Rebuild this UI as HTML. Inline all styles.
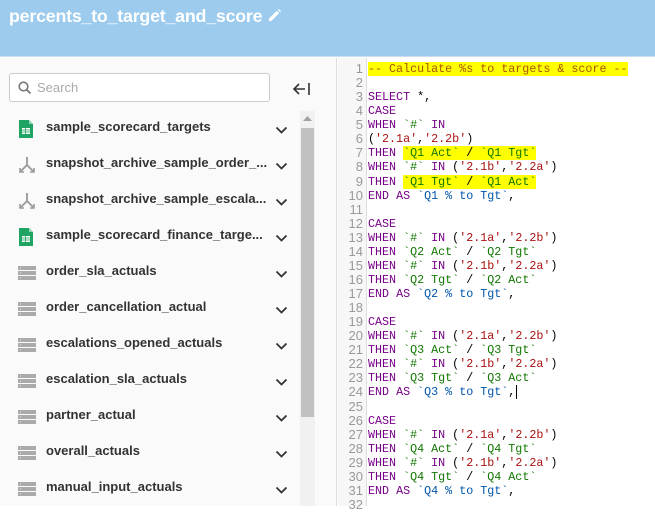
<!DOCTYPE html>
<html><head><meta charset="utf-8">
<style>
*{margin:0;padding:0;box-sizing:border-box}
body{width:655px;height:506px;overflow:hidden;background:#fff;font-family:"Liberation Sans",sans-serif;position:relative}
.hdr{position:absolute;left:0;top:0;width:655px;height:57px;background:#9ccbee;border-bottom:1px solid #c9def0}
.hdr .t{position:absolute;left:9px;top:6px;color:#fff;font-weight:bold;font-size:17.8px;letter-spacing:-0.2px}
.side{position:absolute;left:0;top:58px;width:337px;height:448px;background:#fafafa;border-right:1px solid #ddd}
.search{position:absolute;left:9px;top:15px;width:261px;height:29px;border:1px solid #ccc;border-radius:3px;background:#fff}
.search span{position:absolute;left:27px;top:6px;color:#aaa;font-size:13px}
.item{position:absolute;left:0;height:20px;width:300px}
.item .n{position:absolute;left:46px;top:1px;font-size:13px;font-weight:bold;color:#333;white-space:nowrap}
.item .ic{position:absolute;left:18px;top:1px}
.item .ch{position:absolute;left:275px;top:4px}
.sb{position:absolute;left:300px;top:53px;width:15px;height:395px;background:#f1f1f1}
.sb .th{position:absolute;left:1px;top:17px;width:13px;height:289px;background:#c1c1c1}
.gut{position:absolute;left:338px;top:58px;width:29px;height:448px;background:#f7f7f7;border-right:1px solid #ddd}
.code{position:absolute;left:338px;top:62px;font-family:"Liberation Mono",monospace;font-size:11.7px;line-height:14.07px;white-space:pre}
.ln{display:block;height:14.07px;position:relative}
.ln .num{display:inline-block;width:25px;text-align:right;color:#999;margin-right:5px;font-family:"Liberation Sans",sans-serif;font-size:13px;line-height:14px;vertical-align:top}
.k{color:#770088}.s{color:#aa1111}.b{color:#117700}.v{color:#0055aa}.c{color:#aa5500}.o{color:#555}
.hl{background:#ffff00}
</style></head><body>
<div class="hdr"><div class="t">percents_to_target_and_score <svg width="15" height="15" viewBox="0 0 16 16" style="vertical-align:-1px"><path d="M2 11.5 L10.5 3 L13 5.5 L4.5 14 L2 14 Z M11.5 2 L12.5 1 L15 3.5 L14 4.5 Z" fill="#fff"/></svg></div></div>
<div class="side">
 <div class="search"><svg style="position:absolute;left:8px;top:7px" width="14" height="14" viewBox="0 0 14 14"><circle cx="5.5" cy="5.5" r="4.3" fill="none" stroke="#777" stroke-width="1.6"/><path d="M8.7 8.7 L12.5 12.5" stroke="#777" stroke-width="1.8"/></svg><span>Search</span></div>
 <svg style="position:absolute;left:292px;top:23px" width="20" height="16" viewBox="0 0 20 16"><path d="M2 8 H13 M7 3 L2 8 L7 13" fill="none" stroke="#333" stroke-width="1.6"/><path d="M17 2 V14" stroke="#333" stroke-width="1.6"/></svg>
 <div class="sb"><svg style="position:absolute;left:3px;top:5px" width="9" height="6"><path d="M0 5 L4.5 0 L9 5Z" fill="#a3a3a3"/></svg><div class="th"></div></div>
</div>
<div class="gut"></div>
<div id="items"></div>
<div class="code" id="code"></div>
<script>
var sheet='<svg width="16" height="20" viewBox="0 0 16 20"><path d="M1 1 H11 L15 5 V19 H1Z" fill="#1fa463"/><path d="M11 1 V5 H15" fill="#8ed1b1"/><rect x="4" y="9" width="8" height="6" fill="#fff"/><path d="M4 11 H12 M4 13 H12 M7.5 9 V15" stroke="#1fa463" stroke-width="0.8"/></svg>';
var br='<svg width="18" height="20" viewBox="0 0 18 20"><path d="M9 2 V10 L3 16 M9 10 L15 16" fill="none" stroke="#999" stroke-width="1.8"/><path d="M2 13 V17 H6 M16 13 V17 H12" fill="none" stroke="#999" stroke-width="1.6"/></svg>';
var db='<svg width="18" height="20" viewBox="0 0 18 20"><rect x="0" y="3" width="18" height="4" fill="#aaa"/><rect x="0" y="8" width="18" height="4" fill="#aaa"/><rect x="0" y="13" width="18" height="4" fill="#aaa"/><path d="M2 5 H3 M2 10 H3 M2 15 H3" stroke="#eee"/></svg>';
var ch='<svg width="13" height="9" viewBox="0 0 13 9"><path d="M1.5 1.5 L6.5 6.5 L11.5 1.5" fill="none" stroke="#333" stroke-width="1.8"/></svg>';
var items=[[sheet,'sample_scorecard_targets'],[br,'snapshot_archive_sample_order_...'],[br,'snapshot_archive_sample_escala...'],[sheet,'sample_scorecard_finance_targe...'],[db,'order_sla_actuals'],[db,'order_cancellation_actual'],[db,'escalations_opened_actuals'],[db,'escalation_sla_actuals'],[db,'partner_actual'],[db,'overall_actuals'],[db,'manual_input_actuals']];
var h='';items.forEach(function(it,i){h+='<div class="item" style="top:'+(118+i*36)+'px"><div class="ic">'+it[0]+'</div><div class="n">'+it[1]+'</div><div class="ch">'+ch+'</div></div>'});
document.getElementById('items').innerHTML=h;
function K(t){return '<span class="k">'+t+'</span>'}function S(t){return '<span class="s">'+t+'</span>'}function B(t){return '<span class="b">'+t+'</span>'}function V(t){return '<span class="v">'+t+'</span>'}
var L=['<span class="hl c">-- Calculate %s to targets &amp; score --</span>','',K('SELECT')+' *,',K('CASE'),K('WHEN')+' '+B('`#`')+' '+K('IN'),'('+S("'2.1a'")+','+S("'2.2b'")+')',
K('THEN')+' <span class="hl">'+B('`Q1 Act`')+' / '+B('`Q1 Tgt`')+'</span>',K('WHEN')+' '+B('`#`')+' '+K('IN')+' ('+S("'2.1b'")+','+S("'2.2a'")+')',
K('THEN')+' <span class="hl">'+B('`Q1 Tgt`')+' / '+B('`Q1 Act`')+'</span>',K('END')+' '+K('AS')+' '+V('`Q1 % to Tgt`')+','];
['2','3','4'].forEach(function(q,i){L.push('');L.push(K('CASE'));L.push(K('WHEN')+' '+B('`#`')+' '+K('IN')+' ('+S("'2.1a'")+','+S("'2.2b'")+')');
L.push(K('THEN')+' '+B('`Q'+q+' Act`')+' / '+B('`Q'+q+' Tgt`'));L.push(K('WHEN')+' '+B('`#`')+' '+K('IN')+' ('+S("'2.1b'")+','+S("'2.2a'")+')');
L.push(K('THEN')+' '+B('`Q'+q+' Tgt`')+' / '+B('`Q'+q+' Act`'));L.push(K('END')+' '+K('AS')+' '+V('`Q'+q+' % to Tgt`')+','+(q=='3'?'<span style="border-left:1px solid #000;margin-left:1px"></span>':''));});
L.push('');
var c='';L.forEach(function(l,i){c+='<span class="ln"><span class="num">'+(i+1)+'</span>'+l+'</span>'});
document.getElementById('code').innerHTML=c;
</script>
</body></html>
